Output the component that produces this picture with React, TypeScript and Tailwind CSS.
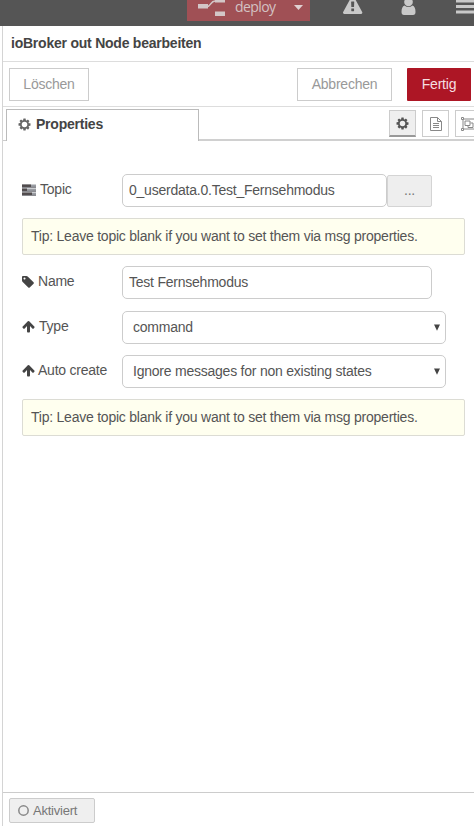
import type { ReactNode } from 'react';

const COG =
  'M1152 896q0-106-75-181t-181-75-181 75-75 181 75 181 181 75 181-75 75-181zm512-109v222q0 12-8 23t-20 13l-185 28q-19 54-39 91 35 50 107 138 10 12 10 25t-9 23q-27 37-99 108t-94 71q-12 0-26-9l-138-108q-44 23-91 38-16 136-29 186-7 28-36 28h-222q-14 0-24.5-8.5t-11.5-21.5l-28-184q-49-16-90-37l-141 107q-10 9-25 9-14 0-25-11-126-114-165-168-7-10-7-23 0-12 8-23 15-21 51-66.5t54-70.5q-27-50-41-99l-183-27q-13-2-21-12.5t-8-23.5v-222q0-12 8-23t19-13l186-28q14-46 39-92-40-57-107-138-10-12-10-24 0-10 9-23 26-36 98.5-107.5t94.5-71.5q13 0 26 10l138 107q44-23 91-38 16-136 29-186 7-28 36-28h222q14 0 24.5 8.5t11.5 21.5l28 184q49 16 90 37l142-107q9-9 24-9 13 0 25 10 129 119 165 170 7 8 7 22 0 12-8 23-15 21-51 66.5t-54 70.5q26 50 41 98l183 28q13 2 21 12.5t8 23.5z';
const TAG =
  'M576 448q0-53-37.5-90.5t-90.5-37.5-90.5 37.5-37.5 90.5 37.5 90.5 90.5 37.5 90.5-37.5 37.5-90.5zm1067 576q0 53-37 90l-491 492q-39 37-91 37-53 0-90-37l-715-716q-38-37-64.5-101t-26.5-117v-416q0-52 38-90t90-38h416q53 0 117 26.5t102 64.5l715 714q37 39 37 91z';
const ARROW =
  'M1675 971q0 51-37 90l-75 75q-38 38-91 38-54 0-90-38l-294-293v704q0 52-37.5 84.5t-90.5 32.5h-128q-53 0-90.5-32.5t-37.5-84.5v-704l-294 293q-36 38-90 38t-90-38l-75-75q-38-38-38-90 0-53 38-91l651-651q35-37 90-37 54 0 91 37l651 651q37 39 37 91z';
const WARNING =
  'M1024 1375v-190q0-14-9.5-23.5t-22.5-9.5h-192q-13 0-22.5 9.5t-9.5 23.5v190q0 14 9.5 23.5t22.5 9.5h192q13 0 22.5-9.5t9.5-23.5zm-2-374l18-459q0-12-10-19-13-11-24-11h-220q-11 0-24 11-10 7-10 21l17 457q0 10 10 16.5t24 6.5h185q14 0 23.5-6.5t10.5-16.5zm-14-934l768 1408q35 63-2 126-17 29-46.5 46t-63.5 17h-1536q-34 0-63.5-17t-46.5-46q-37-63-2-126l768-1408q17-31 47-49t65-18 65 18 47 49z';

function Glyph({ d, className, viewBox = '0 0 1792 1792' }: { d: string; className: string; viewBox?: string }) {
  return (
    <svg viewBox={viewBox} fill="currentColor" className={`shrink-0 ${className}`}>
      <path d={d} />
    </svg>
  );
}

function Cog({ hole, className }: { hole: string; className: string }) {
  return (
    <svg viewBox="64 64 1664 1664" fill="currentColor" className={`shrink-0 ${className}`}>
      <path d={COG} />
      <circle cx="896" cy="896" r="350" fill={hole} />
    </svg>
  );
}

function TasksIcon() {
  return (
    <svg viewBox="0 0 14 12" className="h-3 w-3.5 shrink-0">
      <path fill="#9a9da3" d="M0 .5h14v3H0zM0 4.5h14v3H0zM0 8.5h14v3H0z" />
      <path fill="#504b4c" d="M0 .5h9v2.6H0zM0 4.5h5v2.6H0zM0 8.5h10v2.6H0z" />
      <path fill="none" stroke="#64666b" strokeWidth=".8" d="M0 3.3h14M0 7.3h14M0 11.3h14" />
    </svg>
  );
}

function Row({ icon, label, labelClass, children }: { icon: ReactNode; label: string; labelClass: string; children: ReactNode }) {
  return (
    <div className="flex h-[33px] items-center">
      <div className="flex h-full w-[100px] items-center pb-[2px] text-[#555]">
        {icon}
        <span className={labelClass}>{label}</span>
      </div>
      {children}
    </div>
  );
}

function Select({ value }: { value: string }) {
  return (
    <div className="flex h-[33px] w-[324px] items-center justify-between rounded-[5px] border border-[#ccc] pr-[5px] pl-2.5">
      <span>{value}</span>
      <svg viewBox="0 0 6 7" className="h-[7px] w-1.5">
        <path d="M0 .5h6L3 6.8z" fill="#444" />
      </svg>
    </div>
  );
}

function Tip({ className }: { className: string }) {
  return (
    <div className={`flex h-[37px] w-[443px] items-center rounded-[2px] border border-[#dcdcd4] bg-[#ffffef] pl-2 ${className}`}>
      Tip: Leave topic blank if you want to set them via msg properties.
    </div>
  );
}

function Header() {
  return (
    <header className="flex h-[26px] shrink-0 items-start bg-[#555] pl-[187px] text-[#c9c9c9]">
      <div className="flex h-[21px] w-[123px] shrink-0 bg-[#a05055]">
        <svg viewBox="0 0 28 17" className="ml-[11px] h-[17px] w-7" fill="#d3c6c7">
          <rect y="4" width="10" height="4.500" />
          <rect x="17" y="-2" width="10" height="4.500" />
          <rect x="17" y="11.500" width="10" height="4.500" />
          <path d="M9 6.600c4 0 3.500-5.600 8-5.600" fill="none" stroke="#d3c6c7" strokeWidth="1.500" />
        </svg>
        <span className="ml-[9px] w-[43px] font-['Open_Sans',sans-serif] text-[14px] leading-[14px] tracking-[-0.6px] text-[#d3c2c3]">deploy</span>
        <svg viewBox="0 0 9 5" className="mt-[5px] ml-[16px] h-[5px] w-[9px]">
          <path d="M0 0h9L4.500 5z" fill="#e0d0d1" />
        </svg>
      </div>
      <svg viewBox="0 0 20 16" className="ml-[33px] h-4 w-5 shrink-0" fill="currentColor">
        <g transform="translate(0 -4) scale(.0108)">
          <path d={WARNING} />
        </g>
      </svg>
      <svg viewBox="0 0 15 16" className="ml-[38px] h-4 w-[15px] shrink-0" fill="currentColor">
        <circle cx="7.500" cy="2" r="4.300" />
        <path d="M3.500 5.500Q7.500 8.500 11.500 5.500Q14.500 6.500 14.500 12Q14.500 15 12 15H3Q.5 15 .5 12Q.5 6.500 3.500 5.500Z" />
      </svg>
      <svg viewBox="0 0 18 14" className="ml-[40px] h-3.5 w-[18px] shrink-0" fill="currentColor">
        <path d="M0 0h18v2.500H0zM0 5h18v3H0zM0 10.500h18v3H0z" />
      </svg>
    </header>
  );
}

export default function App() {
  return (
    <div className="flex h-[826px] w-[474px] flex-col overflow-hidden bg-white font-['Liberation_Sans',Arial,sans-serif] text-[14px] tracking-[-0.23px] whitespace-nowrap text-[#555]">
      <Header />
      <main className="ml-[2px] flex grow flex-col border-l border-[#d4d4d4]">
        <h1 className="flex h-9 shrink-0 items-center border-b border-[#ddd] pl-2 font-bold text-[#444]">ioBroker out Node bearbeiten</h1>
        <div className="flex h-[45px] shrink-0 items-center border-b border-[#ddd] pl-[6px] text-[#999]">
          <button className="h-[33px] w-20 border border-[#ccc]">Löschen</button>
          <button className="ml-[208px] h-[33px] w-[95px] border border-[#ccc]">Abbrechen</button>
          <button className="ml-[15px] h-[33px] w-16 rounded-[1px] bg-[#ad1625] text-[#f5dfe1]">Fertig</button>
        </div>
        <div className="flex h-[34px] shrink-0">
          <div className="w-[3px] shrink-0 border-b border-[#ccc]" />
          <div className="mt-[2px] flex w-[193px] shrink-0 items-center border border-b-0 border-[#bbb] pb-[2px] pl-[11px] font-bold text-[#444]">
            <Cog hole="#fff" className="size-[13px] text-[#666]" />
            <span className="ml-[5px]">Properties</span>
          </div>
          <div className="flex w-0 grow overflow-hidden border-b-2 border-[#d0d0d0] pl-[190px]">
            <div className="mt-[3px] flex h-[27px] w-[27px] shrink-0 items-center justify-center border border-b-2 border-[#ccc] border-b-[#999] bg-[#efefef]">
              <Cog hole="#efefef" className="size-[13px] text-[#555]" />
            </div>
            <div className="mt-[3px] ml-1.5 flex h-[27px] w-[27px] shrink-0 items-center justify-center border border-[#ccc]">
              <svg viewBox="0 0 12 14" className="h-3.5 w-3" fill="none" stroke="#888">
                <path d="M.5.5h7l4 4v9H.5zM7.500.5v4h4M3 6.500h6M3 8.500h6M3 10.500h6" />
              </svg>
            </div>
            <div className="mt-[3px] ml-1.5 flex h-[27px] w-[27px] shrink-0 items-center border border-[#ccc] pl-[5px]">
              <svg viewBox="0 0 16 14" className="h-3.5 w-4 shrink-0" fill="none" stroke="#888">
                <path d="M2 2h12v10H2zM4 4h5v4.500H4zM9.500 6h2.500v4.500H7V8.500" />
                <path d="M.5.500h2v2h-2zM13.500.500h2v2h-2zM.5 11.500h2v2h-2zM13.500 11.500h2v2h-2z" fill="#fff" />
              </svg>
            </div>
          </div>
        </div>
        <section className="flex grow flex-col pt-[33px] pl-[19px]">
          <Row icon={<TasksIcon />} label="Topic" labelClass="ml-[4px]">
            <div className="flex h-[33px] w-[265px] items-center rounded-[5px] border border-[#ccc] pl-1.5">0_userdata.0.Test_Fernsehmodus</div>
            <button className="h-8 w-[45px] rounded-[2px] border border-[#d4d4d4] bg-[#eee] text-[#777]">...</button>
          </Row>
          <Tip className="mt-[11px]" />
          <div className="mt-[11px] flex flex-col gap-[11.5px]">
            <Row icon={<Glyph d={TAG} viewBox="128 128 1536 1536" className="size-3 text-[#444]" />} label="Name" labelClass="ml-[4px]">
              <div className="flex h-[33px] w-[310px] items-center rounded-[5px] border border-[#ccc] pl-1.5">Test Fernsehmodus</div>
            </Row>
            <Row icon={<Glyph d={ARROW} viewBox="64 64 1664 1664" className="size-[13px] text-[#444]" />} label="Type" labelClass="ml-[4px]">
              <Select value="command" />
            </Row>
            <Row icon={<Glyph d={ARROW} viewBox="64 64 1664 1664" className="size-[13px] text-[#444]" />} label="Auto create" labelClass="ml-[3px]">
              <Select value="Ignore messages for non existing states" />
            </Row>
          </div>
          <Tip className="mt-[11px]" />
        </section>
        <footer className="flex h-[34px] shrink-0 items-start border-t border-[#ccc] pt-[5px] pl-[6px]">
          <button className="flex h-[25px] w-[86px] items-center rounded-[2px] border border-[#ccc] bg-[#efefef] pl-2 text-[13px] text-[#777]">
            <svg viewBox="0 0 11 11" className="mr-1 size-[11px]">
              <circle cx="5.500" cy="5.500" r="4.700" fill="none" stroke="#888" strokeWidth="1.500" />
            </svg>
            Aktiviert
          </button>
        </footer>
      </main>
    </div>
  );
}
